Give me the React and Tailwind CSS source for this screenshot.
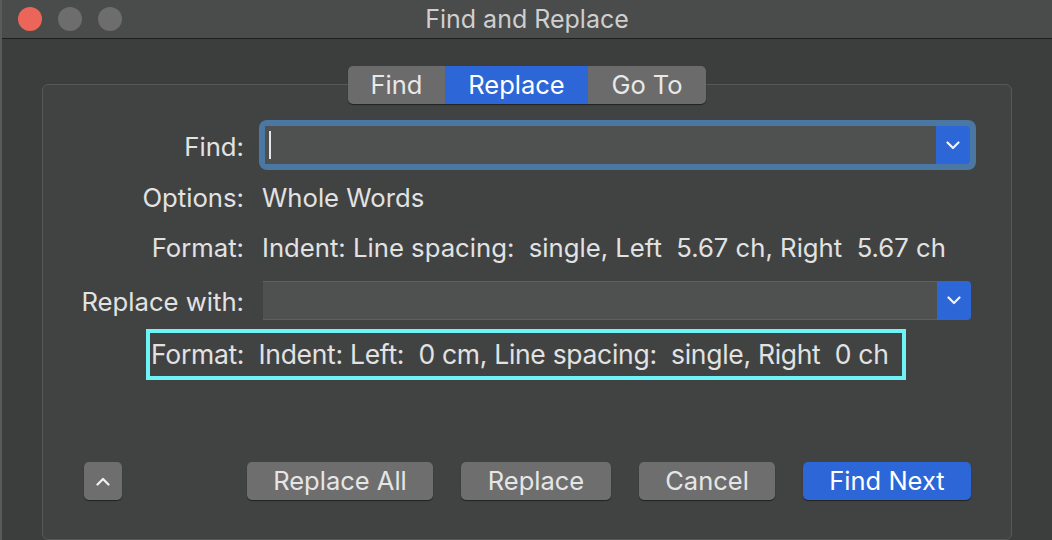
import React from 'react';

const font = { fontFamily: 'Inter, "Noto Sans", sans-serif' };

const Chevron = ({ up }) => (
  <svg width="14" height="9" viewBox="0 0 14 9" fill="none">
    <path
      d={up ? 'M1.5 7.5 L7 2 L12.5 7.5' : 'M1.5 1.5 L7 7 L12.5 1.5'}
      stroke="#f2f2f2"
      strokeWidth="2.2"
      strokeLinecap="round"
      strokeLinejoin="round"
    />
  </svg>
);

const Button = ({ children, className = '', primary }) => (
  <button
    className={`h-[38px] rounded-[5px] text-[25.5px] leading-none ${primary ? 'bg-[#2d66d6] text-white' : 'bg-[#6e6e6e] text-[#e6e6e6]'} shadow-[0_1px_1px_rgba(0,0,0,0.5)] ${className}`}
  >
    {children}
  </button>
);

export default function App() {
  return (
    <div style={font} className="w-[1052px] h-[540px] overflow-hidden bg-[#3c3d3d] text-[#e2e2e2] flex flex-col border-l-2 border-[#5a5a5a]">
      {/* Title bar */}
      <div className="h-[39px] shrink-0 bg-[#4a4b4b] border-b border-[#1e1e1e] flex items-center px-[16px] relative">
        <div className="flex gap-[16px]">
          <span className="w-[24px] h-[24px] rounded-full bg-[#ec6559]" />
          <span className="w-[24px] h-[24px] rounded-full bg-[#6d6d6d]" />
          <span className="w-[24px] h-[24px] rounded-full bg-[#6d6d6d]" />
        </div>
        <div className="absolute left-0 right-0 top-0 h-[39px] flex items-center justify-center text-[25px] text-[#cfcfcf] pointer-events-none">
          Find and Replace
        </div>
      </div>

      {/* Body */}
      <div className="flex-1 relative px-[40px] pt-[45px]">
        <div className="h-full border border-[#565757] rounded-[6px] bg-[#414242] w-[970px] relative">
          {/* Tabs */}
          <div className="absolute left-[305px] top-[-19px] h-[38px] flex rounded-[5px] overflow-hidden bg-[#6b6b6b] text-[25.5px] shadow-[0_1px_1px_rgba(0,0,0,0.5)]">
            <div className="w-[97px] flex items-center justify-center text-[#e8e8e8]">Find</div>
            <div className="w-[143px] flex items-center justify-center bg-[#2d66d6] text-white">Replace</div>
            <div className="w-[118px] flex items-center justify-center text-[#e8e8e8]">Go To</div>
          </div>

          <div className="pt-[35px] flex flex-col text-[25.7px]">
            {/* Find row */}
            <div className="flex items-center h-[50px]">
              <div className="w-[201px] text-right pt-[4px]">Find:</div>
              <div className="ml-[15px] w-[717px] h-[50px] rounded-[8px] bg-[#4a78a3] p-[6px] flex">
                <div className="flex-1 bg-[#4f5050] flex items-center pl-[4px]">
                  <span className="w-[2px] h-[28px] bg-[#e6e6e6]" />
                </div>
                <div className="w-[34px] bg-[#2d66d6] rounded-r-[4px] flex items-center justify-center">
                  <Chevron />
                </div>
              </div>
            </div>

            <div className="flex items-center h-[28px] mt-[14px]">
              <div className="w-[201px] text-right">Options:</div>
              <div className="ml-[18px]">Whole Words</div>
            </div>

            <div className="flex items-center h-[28px] mt-[22px] whitespace-pre">
              <div className="w-[201px] text-right">Format:</div>
              <div className="ml-[18px]">Indent: Line spacing:  single, Left  5.67 ch, Right  5.67 ch</div>
            </div>

            {/* Replace with row */}
            <div className="flex items-center h-[39px] mt-[19px]">
              <div className="w-[201px] text-right pt-[3px]">Replace with:</div>
              <div className="ml-[19px] w-[708px] h-[39px] flex">
                <div className="flex-1 bg-[#4f5050] border-y border-[#5e5f5f]" />
                <div className="w-[34px] bg-[#2d66d6] rounded-r-[4px] flex items-center justify-center">
                  <Chevron />
                </div>
              </div>
            </div>

            {/* Highlighted format */}
            <div className="ml-[103px] mt-[9px] w-[760px] h-[51px] border-[4px] border-[#6ef4f7] flex items-center pl-[1px] text-[26.5px] whitespace-pre tracking-[-0.3px]">
              Format:  Indent: Left:  0 cm, Line spacing:  single, Right  0 ch
            </div>

            {/* Buttons */}
            <div className="flex items-center mt-[82px] pl-[41px] pr-[40px]">
              <Button className="w-[38px] flex items-center justify-center">
                <Chevron up />
              </Button>
              <div className="flex-1" />
              <Button className="w-[186px]">Replace All</Button>
              <Button className="w-[150px] ml-[28px]">Replace</Button>
              <Button className="w-[136px] ml-[28px]">Cancel</Button>
              <Button primary className="w-[168px] ml-[28px]">Find Next</Button>
            </div>
          </div>
        </div>
      </div>
    </div>
  );
}
